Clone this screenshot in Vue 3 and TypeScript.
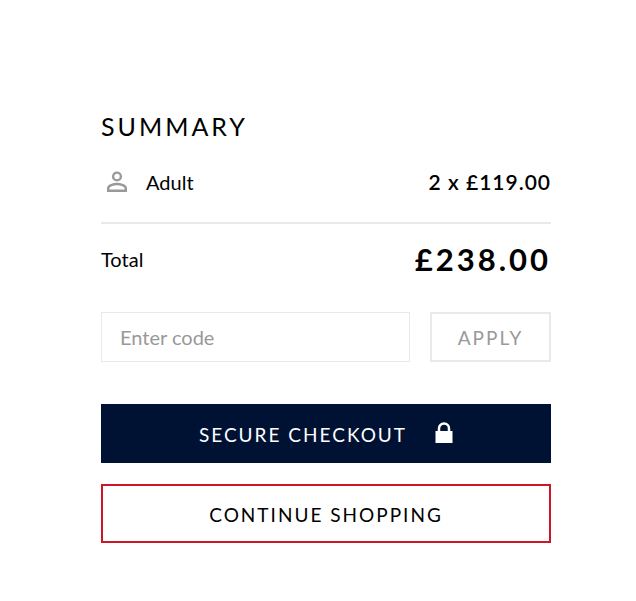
<script setup lang="ts">
import { computed, ref } from 'vue'

const quantity = ref(2)
const unitPrice = ref(119)
const code = ref('')

const money = (value: number): string => `£${value.toFixed(2)}`
const total = computed(() => money(quantity.value * unitPrice.value))
</script>

<template>
  <main class="summary">
    <h1 class="title">SUMMARY</h1>

    <div class="line">
      <span class="guest">
        <svg class="person" viewBox="0 0 22 22" aria-hidden="true">
          <circle cx="11" cy="5.500" r="3.900" />
          <path d="M2.200 19.800v-2.600c0-2.800 5.400-4.200 8.800-4.200s8.800 1.400 8.800 4.200v2.600z" />
        </svg>
        <span>Adult</span>
      </span>
      <span class="price">{{ quantity }} x {{ money(unitPrice) }}</span>
    </div>

    <div class="line total">
      <span>Total</span>
      <strong class="amount">{{ total }}</strong>
    </div>

    <form class="promo" @submit.prevent>
      <input v-model="code" class="code" type="text" placeholder="Enter code" aria-label="Enter code" />
      <button class="apply" type="submit">APPLY</button>
    </form>

    <button class="action checkout" type="button">
      <span>SECURE CHECKOUT</span>
      <svg class="lock" viewBox="0 0 18 22" aria-hidden="true">
        <path class="shackle" d="M4 10V6.500a5 5 0 0 1 10 0V10" />
        <path class="body" d="M0.500 9h17v12h-17z" />
      </svg>
    </button>
    <button class="action continue" type="button">CONTINUE SHOPPING</button>
  </main>
</template>

<style>
body {
  background: #fff;
}
</style>

<style scoped>
.summary {
  box-sizing: border-box;
  padding: 108px 85px 58px 101px;
  font-family: Lato, sans-serif;
  font-size: 20px;
  line-height: 24px;
  color: #000;
}

.title {
  margin: 0;
  font-size: 25px;
  font-weight: 400;
  line-height: 36px;
  letter-spacing: 3px;
}

.line {
  display: flex;
  align-items: center;
  justify-content: space-between;
  height: 76px;
}

.total {
  height: 70px;
  margin-top: 2px;
  border-top: 2px solid #e9e9e9;
}

.guest {
  display: flex;
  align-items: center;
  gap: 18px;
  padding-left: 5px;
}

.person {
  width: 22px;
  height: 22px;
  fill: none;
  stroke: #999;
  stroke-width: 2.400;
}

.price {
  font-size: 21px;
  font-weight: 600;
  letter-spacing: 1px;
}

.amount {
  font-size: 31px;
  font-weight: 700;
  line-height: 40px;
  letter-spacing: 3px;
}

.promo {
  display: flex;
  gap: 20px;
  margin-top: 18px;
}

.code,
.apply,
.action {
  box-sizing: border-box;
  margin: 0;
  border-radius: 0;
  font: inherit;
}

.code {
  flex: 1;
  min-width: 0;
  height: 50px;
  padding: 0 18px;
  border: 1px solid #e9e9e9;
  background: #fff;
  color: #000;
  outline: none;
}

.code::placeholder {
  color: #999;
  opacity: 1;
}

.apply,
.action {
  padding: 2px 0 0;
  font-size: 19px;
  letter-spacing: 2px;
  cursor: pointer;
}

.apply {
  width: 121px;
  height: 50px;
  border: 2px solid #e9e9e9;
  background: #fff;
  color: #999;
}

.action {
  display: flex;
  align-items: center;
  justify-content: center;
  width: 100%;
  height: 59px;
  border: 0;
}

.checkout {
  gap: 28px;
  margin-top: 42px;
  background: #001233;
  color: #fff;
}

.lock {
  width: 18px;
  height: 22px;
  margin-bottom: 4px;
}

.shackle {
  fill: none;
  stroke: #fff;
  stroke-width: 2.5;
}

.body {
  fill: #fff;
}

.continue {
  margin-top: 21px;
  border: 2px solid #cb1628;
  background: #fff;
  color: #000;
}
</style>
